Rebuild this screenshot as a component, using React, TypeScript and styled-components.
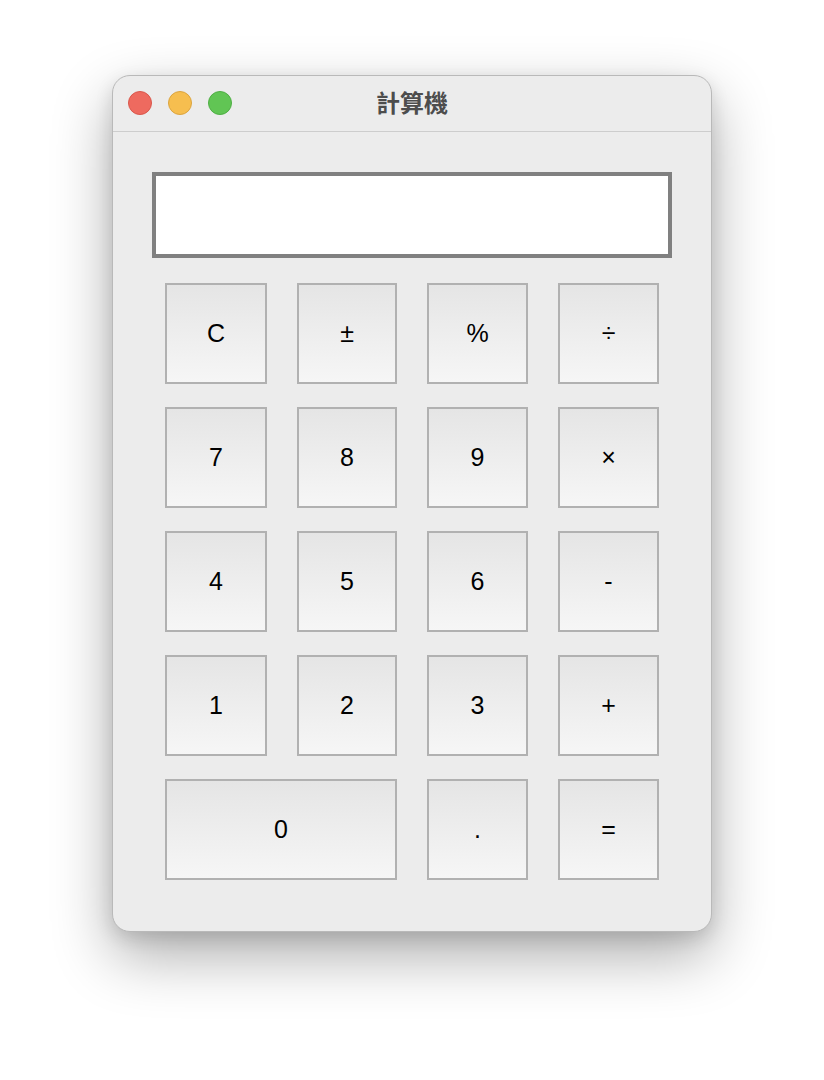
import React, { useState } from 'react';
import styled, { createGlobalStyle } from 'styled-components';

const GlobalStyle = createGlobalStyle`
  * {
    box-sizing: border-box;
  }
  body {
    margin: 0;
    background: #ffffff;
    font-family: "Liberation Sans", Arial, sans-serif;
  }
`;

const Page = styled.div`
  min-height: 1080px;
  display: flex;
  justify-content: center;
  align-items: flex-start;
  padding-top: 75px;
`;

const Window = styled.div`
  width: 600px;
  background: #ececec;
  border: 1px solid #b9b9b9;
  border-radius: 18px;
  overflow: hidden;
  box-shadow: 0 24px 60px rgba(0, 0, 0, 0.32), 0 6px 18px rgba(0, 0, 0, 0.12);
`;

const TitleBar = styled.div`
  position: relative;
  height: 56px;
  display: flex;
  align-items: center;
  justify-content: center;
  border-bottom: 1px solid #cdcdcd;
`;

const Lights = styled.div`
  position: absolute;
  left: 15px;
  top: 15px;
  display: flex;
  gap: 16px;
`;

const Light = styled.span<{ $color: string; $edge: string }>`
  width: 24px;
  height: 24px;
  border-radius: 50%;
  background: ${({ $color }) => $color};
  border: 1px solid ${({ $edge }) => $edge};
`;

const Title = styled.div`
  font-family: "Noto Sans CJK TC", "Noto Sans CJK SC", sans-serif;
  font-weight: 700;
  font-size: 24px;
  line-height: 1;
  color: #4d4d4d;
  padding-bottom: 3px;
`;

const Body = styled.div`
  padding: 40px 39px 51px;
`;

const Display = styled.div`
  height: 86px;
  background: #ffffff;
  border: 4px solid #808080;
  display: flex;
  align-items: center;
  justify-content: flex-end;
  padding: 0 12px;
  font-size: 30px;
  color: #000;
`;

const Keypad = styled.div`
  margin: 25px 13px 0;
  display: grid;
  grid-template-columns: 102px 100px 101px 101px;
  grid-auto-rows: 101px;
  column-gap: 30px;
  row-gap: 23px;
`;

const Key = styled.button<{ $span?: number }>`
  grid-column: span ${({ $span }) => $span || 1};
  border: 2px solid #b1b1b1;
  background: linear-gradient(to bottom, #e5e5e5, #f6f6f6);
  font-family: "Liberation Sans", Arial, sans-serif;
  font-size: 25px;
  color: #000;
  padding: 0;
  border-radius: 0;
  cursor: pointer;
  display: flex;
  align-items: center;
  justify-content: center;
`;

const keys: { label: string; span?: number }[] = [
  { label: 'C' }, { label: '±' }, { label: '%' }, { label: '÷' },
  { label: '7' }, { label: '8' }, { label: '9' }, { label: '×' },
  { label: '4' }, { label: '5' }, { label: '6' }, { label: '-' },
  { label: '1' }, { label: '2' }, { label: '3' }, { label: '+' },
  { label: '0', span: 2 }, { label: '.' }, { label: '=' },
];

export default function App() {
  const [value, setValue] = useState('');

  const press = (k: string) => {
    if (k === 'C') return setValue('');
    if (k === '=') {
      try {
        const expr = value.replace(/×/g, '*').replace(/÷/g, '/');
        // eslint-disable-next-line no-new-func
        setValue(String(Function('return (' + expr + ')')()));
      } catch {
        setValue('');
      }
      return;
    }
    if (k === '±') return setValue(value ? String(-Number(value)) : '');
    if (k === '%') return setValue(value ? String(Number(value) / 100) : '');
    setValue(value + k);
  };

  return (
    <>
      <GlobalStyle />
      <Page>
        <Window>
          <TitleBar>
            <Lights>
              <Light $color="#ee6a5f" $edge="#d9574c" />
              <Light $color="#f6be4f" $edge="#dba43f" />
              <Light $color="#61c554" $edge="#4fae44" />
            </Lights>
            <Title>計算機</Title>
          </TitleBar>
          <Body>
            <Display>{value}</Display>
            <Keypad>
              {keys.map((k) => (
                <Key key={k.label} $span={k.span} onClick={() => press(k.label)}>
                  {k.label}
                </Key>
              ))}
            </Keypad>
          </Body>
        </Window>
      </Page>
    </>
  );
}
